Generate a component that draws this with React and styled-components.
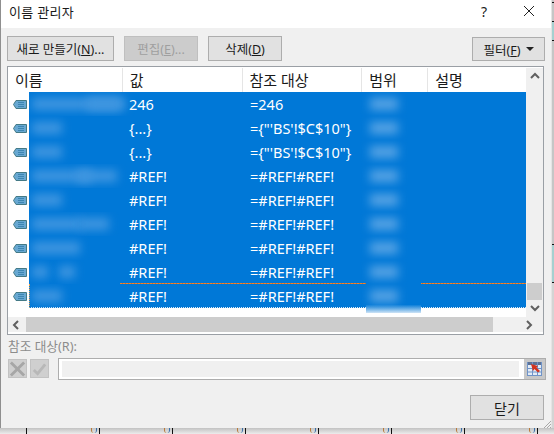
import React from 'react'
import styled, { createGlobalStyle } from 'styled-components'

const rows = [
  { value: '246', ref: '=246', blur: [[3, 88], [58, 38]] },
  { value: '{...}', ref: '={"\'BS\'!$C$10"}', blur: [[3, 30]] },
  { value: '{...}', ref: '={"\'BS\'!$C$10"}', blur: [[3, 30]] },
  { value: '#REF!', ref: '=#REF!#REF!', blur: [[3, 60], [48, 40]] },
  { value: '#REF!', ref: '=#REF!#REF!', blur: [[3, 30]] },
  { value: '#REF!', ref: '=#REF!#REF!', blur: [[3, 50], [50, 30]] },
  { value: '#REF!', ref: '=#REF!#REF!', blur: [[3, 48]] },
  { value: '#REF!', ref: '=#REF!#REF!', blur: [[3, 16], [30, 16]], marked: true },
  { value: '#REF!', ref: '=#REF!#REF!', blur: [[3, 30]], last: true },
]

const columns = [
  { label: '이름', width: 115 },
  { label: '값', width: 120 },
  { label: '참조 대상', width: 120 },
  { label: '범위', width: 66 },
  { label: '설명', width: 98 },
]

const sheetLines = [26, 99, 172, 245, 318, 391, 464, 537]
const sheetZeros = [91, 164, 237, 310, 383, 456, 529]
const sideBands = [
  { height: 2, color: '#c6c6c6' },
  { height: 1, color: '#111' },
  { height: 18, color: '#c6c6c6' },
  { height: 1, color: '#111' },
  { height: 19, color: '#a6d0d0' },
  { height: 1, color: '#111' },
  { height: 205, color: '#c6c6c6' },
  { height: 1, color: '#111' },
  { height: 38, color: '#a6d0d0' },
  { height: 1, color: '#111' },
  { height: 147, color: '#d4d4d4' },
]

const NameIcon = () => (
  <svg width="14" height="11" viewBox="0 0 14 11">
    <path d="M0.5 5.5 L3 1.5 H13.5 V9.5 H3 Z" fill="#68a8d2" stroke="#447a86" strokeWidth="1" />
    <path d="M5 3.5 H11 M5 5.5 H11 M5 7.5 H11" stroke="#3d86b2" strokeWidth="1" />
  </svg>
)

const Arrow = ({ dir }) => {
  const d = {
    up: 'M1 6 L5 2 L9 6',
    down: 'M1 2 L5 6 L9 2',
    left: 'M6 1 L2 5 L6 9',
    right: 'M2 1 L6 5 L2 9',
  }[dir]
  return (
    <svg width="10" height="10" viewBox="0 0 10 10">
      <path d={d} fill="none" stroke="#606060" strokeWidth="2" />
    </svg>
  )
}

const App = () => {
  return (
    <>
      <GlobalStyle />
      <Page>
        <Dialog>
          <TitleBar>
            <Title>이름 관리자</Title>
            <HelpMark>?</HelpMark>
            <CloseIcon width="12" height="12" viewBox="0 0 12 12">
              <path d="M1 1 L11 11 M11 1 L1 11" stroke="#222" strokeWidth="1" />
            </CloseIcon>
          </TitleBar>
          <Body>
            <Toolbar>
              <Button $width={107}><span>새로 만들기(<u>N</u>)...</span></Button>
              <Button $width={74} $disabled><span>편집(<u>E</u>)...</span></Button>
              <Button $width={74}><span>삭제(<u>D</u>)</span></Button>
              <FilterButton>
                <span>필터(<u>F</u>)</span>
                <Caret />
              </FilterButton>
            </Toolbar>
            <ListBox>
              <ListMain>
                <ListContent>
                  <Header>
                    {columns.map((c) => (
                      <HeaderCell key={c.label} $width={c.width}>{c.label}</HeaderCell>
                    ))}
                  </Header>
                  {rows.map((r, i) => (
                    <Row key={i}>
                      <IconCell><NameIcon /></IconCell>
                      <Selection $last={r.last}>
                        <NameCell>
                          {r.blur.map(([left, width]) => (
                            <Smudge key={left} $left={left} $width={width} />
                          ))}
                        </NameCell>
                        <Cell $width={121}>{r.value}</Cell>
                        <Cell $width={120}>{r.ref}</Cell>
                        <ScopeCell><ScopeSmudge /></ScopeCell>
                        {r.marked && <DropLine />}
                      </Selection>
                    </Row>
                  ))}
                  <ScopeMask />
                </ListContent>
                <VScroll>
                  <ScrollButton><Arrow dir="up" /></ScrollButton>
                  <VTrack><VThumb /></VTrack>
                  <ScrollButton><Arrow dir="down" /></ScrollButton>
                </VScroll>
              </ListMain>
              <HScroll>
                <HButton><Arrow dir="left" /></HButton>
                <HThumb />
                <HTrackRest />
                <HButton><Arrow dir="right" /></HButton>
              </HScroll>
            </ListBox>
            <RefLabel>참조 대상(R):</RefLabel>
            <RefRow>
              <RefAction>
                <svg width="18" height="18" viewBox="0 0 18 18">
                  <path d="M2 2 L16 16 M16 2 L2 16" stroke="#a6a6a6" strokeWidth="3" />
                </svg>
              </RefAction>
              <RefAction>
                <svg width="18" height="18" viewBox="0 0 18 18">
                  <path d="M3 10 L7 14 L15 4" fill="none" stroke="#b8b8b8" strokeWidth="3" />
                </svg>
              </RefAction>
              <RefInput>
                <RefField />
                <RefPicker>
                  <svg width="15" height="14" viewBox="0 0 15 14">
                    <rect x="0" y="0" width="15" height="14" fill="#e4ecf6" />
                    <rect x="0" y="0" width="15" height="3" fill="#5b7196" />
                    <path d="M0 6.5 H15 M0 10 H15 M0 13.5 H15" stroke="#6f93c8" strokeWidth="1" />
                    <path d="M0.5 0 V14 M5.5 0 V14 M10.5 0 V14 M14.5 0 V14" stroke="#6f93c8" strokeWidth="1" />
                    <path d="M4 2 L11 4 L9.5 5.5 L13 9 L11 10.5 L7.5 7 L6 9 Z" fill="#d2321e" />
                  </svg>
                </RefPicker>
              </RefInput>
            </RefRow>
            <Footer>
              <CloseButton>닫기</CloseButton>
            </Footer>
          </Body>
          <Grip width="8" height="8" viewBox="0 0 8 8">
            <path d="M1 8 L8 1 M4 8 L8 4 M7 8 L8 7" stroke="#a8a8a8" strokeWidth="1" />
          </Grip>
        </Dialog>
        <SideStrip>
          {sideBands.map((b, i) => (
            <SideBand key={i} $height={b.height} $color={b.color} />
          ))}
        </SideStrip>
      </Page>
      <SheetStrip>
        {sheetLines.map((x) => (
          <SheetLine key={x} $left={x} />
        ))}
        {sheetZeros.map((x) => (
          <SheetZero key={x} $left={x} />
        ))}
      </SheetStrip>
    </>
  )
}

export default App

/* ------- STYLING ------- */

const GlobalStyle = createGlobalStyle`
  html, body {
    margin: 0;
    padding: 0;
    width: 554px;
    height: 434px;
    overflow: hidden;
    background: #fff;
    font-family: "Noto Sans", "Noto Sans CJK KR", sans-serif;
    color: #1a1a1a;
  }
  * {
    box-sizing: border-box;
  }
`
const Page = styled.div`
  display: flex;
  height: 428px;
`
const Dialog = styled.div`
  position: relative;
  width: 551px;
  height: 428px;
  border-left: 1px solid #8f8f8f;
  display: flex;
  flex-direction: column;
  background: #f0f0f0;
`
const SideStrip = styled.div`
  width: 3px;
  display: flex;
  flex-direction: column;
  border-left: 1px solid #e4e4e4;
`
const SideBand = styled.div`
  height: ${(p) => p.$height}px;
  background: ${(p) => p.$color};
`
const TitleBar = styled.div`
  height: 28px;
  display: flex;
  align-items: center;
  padding: 0 0 6px 8px;
  background: #fff;
`
const Title = styled.div`
  flex: 1;
  font-size: 13px;
  letter-spacing: 0.3px;
`
const HelpMark = styled.div`
  width: 12px;
  font-size: 14px;
  text-align: center;
  margin-right: 33px;
`
const CloseIcon = styled.svg`
  margin-right: 16px;
`
const Body = styled.div`
  flex: 1;
  display: flex;
  flex-direction: column;
  padding: 8px 6px 0;
`
const Toolbar = styled.div`
  display: flex;
  align-items: flex-start;
  gap: 10px;
  height: 30px;
`
const Button = styled.div`
  width: ${(p) => p.$width}px;
  height: 25px;
  display: flex;
  align-items: center;
  justify-content: center;
  font-size: 12.5px;
  white-space: nowrap;
  color: ${(p) => (p.$disabled ? '#9f9f9f' : '#1a1a1a')};
  background: ${(p) => (p.$disabled ? '#cccccc' : '#e1e1e1')};
  border: 1px solid ${(p) => (p.$disabled ? '#bfbfbf' : '#adadad')};
`
const FilterButton = styled(Button)`
  width: 73px;
  height: 24px;
  margin-top: 1px;
  margin-left: auto;
  gap: 5px;
`
const Caret = styled.span`
  width: 0;
  height: 0;
  border-left: 4px solid transparent;
  border-right: 4px solid transparent;
  border-top: 4px solid #222;
`
const ListBox = styled.div`
  width: 537px;
  height: 269px;
  border: 1px solid #9a9fa5;
  background: #fff;
  display: flex;
  flex-direction: column;
  padding-top: 1px;
`
const ListMain = styled.div`
  flex: 1;
  display: flex;
  min-height: 0;
`
const ListContent = styled.div`
  position: relative;
  flex: 1;
  min-width: 0;
  overflow: hidden;
`
const Header = styled.div`
  height: 24px;
  display: flex;
`
const HeaderCell = styled.div`
  width: ${(p) => p.$width}px;
  padding-left: 7px;
  font-size: 15px;
  line-height: 24px;
  border-right: 1px solid #e5e5e5;
  &:last-child {
    border-right: none;
  }
`
const Row = styled.div`
  height: 24px;
  display: flex;
`
const IconCell = styled.div`
  width: 21px;
  display: flex;
  align-items: center;
  padding-left: 5px;
  padding-top: 1px;
`
const Selection = styled.div`
  position: relative;
  flex: 1;
  display: flex;
  align-items: center;
  background: #0078d7;
  color: #fff;
  font-size: 14.5px;
  overflow: hidden;
  ${(p) => p.$last && `
    &::before {
      content: '';
      position: absolute;
      inset: 0;
      border-left: 1px dotted #f0a040;
      border-bottom: 1px dotted #d8e8f6;
    }
  `}
`
const NameCell = styled.div`
  position: relative;
  width: 100px;
  height: 100%;
`
const Smudge = styled.div`
  position: absolute;
  left: ${(p) => p.$left}px;
  top: 6px;
  width: ${(p) => p.$width}px;
  height: 12px;
  background: #3f96e0;
  filter: blur(5px);
`
const Cell = styled.div`
  width: ${(p) => p.$width}px;
  white-space: nowrap;
`
const ScopeCell = styled.div`
  position: relative;
  width: 60px;
  height: 100%;
`
const ScopeSmudge = styled(Smudge)`
  left: 0;
  width: 28px;
  background: #56a3e4;
  z-index: 2;
`
const DropLine = styled.div`
  position: absolute;
  left: 91px;
  right: 0;
  bottom: 0;
  height: 1px;
  background: repeating-linear-gradient(90deg, #f5822a 0 2px, #c9702c 2px 3px);
`
const ScopeMask = styled.div`
  position: absolute;
  left: 358px;
  top: 211px;
  width: 55px;
  height: 34px;
  background: linear-gradient(#0078d7 75%, #cfe4f6 100%);
  z-index: 1;
`
const VScroll = styled.div`
  width: 17px;
  display: flex;
  flex-direction: column;
  background: #f0f0f0;
`
const ScrollButton = styled.div`
  height: 17px;
  display: flex;
  align-items: center;
  justify-content: center;
`
const VTrack = styled.div`
  flex: 1;
  display: flex;
  flex-direction: column;
  justify-content: flex-end;
`
const VThumb = styled.div`
  height: 17px;
  margin: 0 1px;
  background: #cdcdcd;
`
const HScroll = styled.div`
  height: 15px;
  display: flex;
  margin-bottom: 2px;
  background: #f0f0f0;
`
const HButton = styled.div`
  width: 18px;
  display: flex;
  align-items: center;
  justify-content: center;
  &:last-child {
    width: 50px;
    padding-left: 23px;
  }
`
const HThumb = styled.div`
  width: 468px;
  background: #cdcdcd;
`
const HTrackRest = styled.div`
  flex: 1;
`
const RefLabel = styled.div`
  margin-top: 2px;
  height: 18px;
  font-size: 12.7px;
  line-height: 18px;
  color: #8c8c8c;
  padding-left: 1px;
`
const RefRow = styled.div`
  display: flex;
  margin-top: 3px;
  gap: 2px;
  height: 22px;
`
const RefAction = styled.div`
  width: 19px;
  height: 19px;
  margin: 1px 0 0 1px;
  display: flex;
  align-items: center;
  justify-content: center;
  background: #cfcfcf;
  border: 1px solid #c2c2c2;
`
const RefInput = styled.div`
  flex: 1;
  margin-left: 7px;
  margin-right: -1px;
  display: flex;
  border: 1px solid #adadad;
  background: #fff;
  padding: 2px 0 2px 3px;
`
const RefField = styled.div`
  flex: 1;
  background: #f0f0f0;
`
const RefPicker = styled.div`
  width: 21px;
  margin: -2px 0 -2px 5px;
  display: flex;
  align-items: center;
  justify-content: center;
  background: #c8c8c8;
`
const Footer = styled.div`
  display: flex;
  justify-content: flex-end;
  margin-top: 15px;
  padding-right: 1px;
`
const CloseButton = styled(Button)`
  width: 74px;
  height: 25px;
  font-size: 14px;
`
const Grip = styled.svg`
  position: absolute;
  right: 0;
  bottom: 0;
`
const SheetStrip = styled.div`
  position: relative;
  height: 6px;
  overflow: hidden;
  background: linear-gradient(#c2c2c2, #ececec);
`
const SheetLine = styled.span`
  position: absolute;
  left: ${(p) => p.$left}px;
  top: 0;
  width: 1px;
  height: 6px;
  background: #111;
`
const SheetZero = styled.span`
  position: absolute;
  left: ${(p) => p.$left}px;
  top: 0;
  width: 6px;
  height: 5px;
  border-left: 1px solid #b87a3a;
  border-right: 1px solid #3a70aa;
  border-radius: 0 0 3px 3px;
`
